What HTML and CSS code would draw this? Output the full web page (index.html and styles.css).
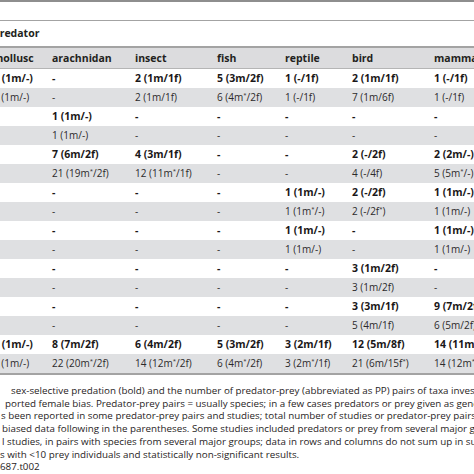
FILE: index.html
```html
<!DOCTYPE html>
<html>
<head>
<meta charset="utf-8">
<link rel="stylesheet" href="styles.css">
</head>
<body>
<div class="page">
  <div class="rule-top"></div>
  <table class="tbl">
    <colgroup>
      <col class="c0"><col class="c1"><col class="c2"><col class="c3"><col class="c4"><col class="c5"><col class="c6">
    </colgroup>
    <thead>
      <tr class="title"><td colspan="7">predator</td></tr>
      <tr class="head"><th>mollusc</th><th>arachnidan</th><th>insect</th><th>fish</th><th>reptile</th><th>bird</th><th>mammal</th></tr>
    </thead>
    <tbody>
      <tr class="b"><td>1 (1m/-)</td><td>-</td><td>2 (1m/1f)</td><td>5 (3m/2f)</td><td>1 (-/1f)</td><td>2 (1m/1f)</td><td>1 (-/1f)</td></tr>
      <tr class="g"><td>1 (1m/-)</td><td>-</td><td>2 (1m/1f)</td><td>6 (4m<span class="a">*</span>/2f)</td><td>1 (-/1f)</td><td>7 (1m/6f)</td><td>1 (-/1f)</td></tr>
      <tr class="b"><td>-</td><td>1 (1m/-)</td><td>-</td><td>-</td><td>-</td><td>-</td><td>-</td></tr>
      <tr class="g"><td>-</td><td>1 (1m/-)</td><td>-</td><td>-</td><td>-</td><td>-</td><td>-</td></tr>
      <tr class="b"><td>-</td><td>7 (6m/2f)</td><td>4 (3m/1f)</td><td>-</td><td>-</td><td>2 (-/2f)</td><td>2 (2m/-)</td></tr>
      <tr class="g"><td>-</td><td>21 (19m<span class="a">*</span>/2f)</td><td>12 (11m<span class="a">*</span>/1f)</td><td>-</td><td>-</td><td>4 (-/4f)</td><td>5 (5m<span class="a">*</span>/-)</td></tr>
      <tr class="b"><td>-</td><td>-</td><td>-</td><td>-</td><td>1 (1m/-)</td><td>2 (-/2f)</td><td>1 (1m/-)</td></tr>
      <tr class="g"><td>-</td><td>-</td><td>-</td><td>-</td><td>1 (1m<span class="a">*</span>/-)</td><td>2 (-/2f<span class="a">*</span>)</td><td>1 (1m/-)</td></tr>
      <tr class="b"><td>-</td><td>-</td><td>-</td><td>-</td><td>1 (1m/-)</td><td>-</td><td>1 (1m/-)</td></tr>
      <tr class="g"><td>-</td><td>-</td><td>-</td><td>-</td><td>1 (1m/-)</td><td>-</td><td>1 (1m/-)</td></tr>
      <tr class="b"><td>-</td><td>-</td><td>-</td><td>-</td><td>-</td><td>3 (1m/2f)</td><td>-</td></tr>
      <tr class="g"><td>-</td><td>-</td><td>-</td><td>-</td><td>-</td><td>3 (1m/2f)</td><td>-</td></tr>
      <tr class="b"><td>-</td><td>-</td><td>-</td><td>-</td><td>-</td><td>3 (3m/1f)</td><td>9 (7m/2f)</td></tr>
      <tr class="g"><td>-</td><td>-</td><td>-</td><td>-</td><td>-</td><td>5 (4m/1f)</td><td>6 (5m/2f)</td></tr>
      <tr class="b"><td>1 (1m/-)</td><td>8 (7m/2f)</td><td>6 (4m/2f)</td><td>5 (3m/2f)</td><td>3 (2m/1f)</td><td>12 (5m/8f)</td><td>14 (11m/3f)</td></tr>
      <tr class="g last"><td>1 (1m/-)</td><td>22 (20m<span class="a">*</span>/2f)</td><td>14 (12m<span class="a">*</span>/2f)</td><td>6 (4m<span class="a">*</span>/2f)</td><td>3 (2m<span class="a">*</span>/1f)</td><td>21 (6m/15f<span class="a">*</span>)</td><td>14 (12m<span class="a">*</span>/2f)</td></tr>
    </tbody>
  </table>
  <div class="caption">
    <div class="ln l1">sex-selective predation (bold) and the number of predator-prey (abbreviated as PP) pairs of taxa investigated</div>
    <div class="ln l2">ported female bias. Predator-prey pairs = usually species; in a few cases predators or prey given as genera or</div>
    <div class="ln l3">s been reported in some predator-prey pairs and studies; total number of studies or predator-prey pairs in</div>
    <div class="ln l4">biased data following in the parentheses. Some studies included predators or prey from several major groups</div>
    <div class="ln l5">l studies, in pairs with species from several major groups; data in rows and columns do not sum up in sum</div>
    <div class="ln l6">s with &lt;10 prey individuals and statistically non-significant results.</div>
    <div class="ln l7">687.t002</div>
  </div>
</div>
</body>
</html>
```

FILE: styles.css
```css
html, body {
  margin: 0;
  padding: 0;
  background: #ffffff;
}
body {
  width: 474px;
  height: 474px;
  overflow: hidden;
  font-family: "Open Sans", "DejaVu Sans", sans-serif;
  color: #231f20;
}
.page {
  width: 474px;
  overflow: hidden;
}
.rule-top {
  height: 2px;
  background: #8e8e8e;
  margin-bottom: 18px;
}
.tbl {
  border-collapse: collapse;
  table-layout: fixed;
  width: 531px;
  margin-left: -7px;
  font-size: 10px;
}
.c0 { width: 59px; }
.c1 { width: 83px; }
.c2 { width: 82px; }
.c3 { width: 68px; }
.c4 { width: 67px; }
.c5 { width: 82px; }
.c6 { width: 90px; }
.tbl td, .tbl th {
  padding: 0;
  text-align: left;
  white-space: nowrap;
  vertical-align: middle;
  line-height: 13px;
}
.title td {
  height: 25px;
  border-top: 1px solid #a3a3a3;
  border-bottom: 2px solid #a3a3a3;
  font-weight: 700;
  font-size: 10.5px;
}
.head th {
  height: 20px;
  background: #dcdcde;
  border-bottom: 1px solid #b5b5b5;
  font-weight: 700;
  font-size: 10.5px;
}
tbody tr {
  height: 19px;
}
tbody td {
  height: 19px;
}
tr.b td {
  font-weight: 700;
  font-size: 10.5px;
  color: #1a1718;
}
tr.g td {
  background: #dfe0e2;
  color: #2c2a2b;
}
tr.last td {
  border-bottom: 2px solid #a3a3a3;
}
.a {
  font-size: 6px;
  vertical-align: 4px;
  line-height: 0;
}
.caption {
  margin-top: 10px;
  font-size: 9.8px;
  line-height: 12.7px;
  color: #1f1b1c;
}
.ln {
  white-space: nowrap;
}
.l1 { padding-left: 11px; }
.l2 { padding-left: 5px; }
.l3 { padding-left: 1px; }
.l4 { padding-left: 2px; }
.l5 { padding-left: 2px; }
.l6 { padding-left: 0; }
.l7 { padding-left: 0; }
```
